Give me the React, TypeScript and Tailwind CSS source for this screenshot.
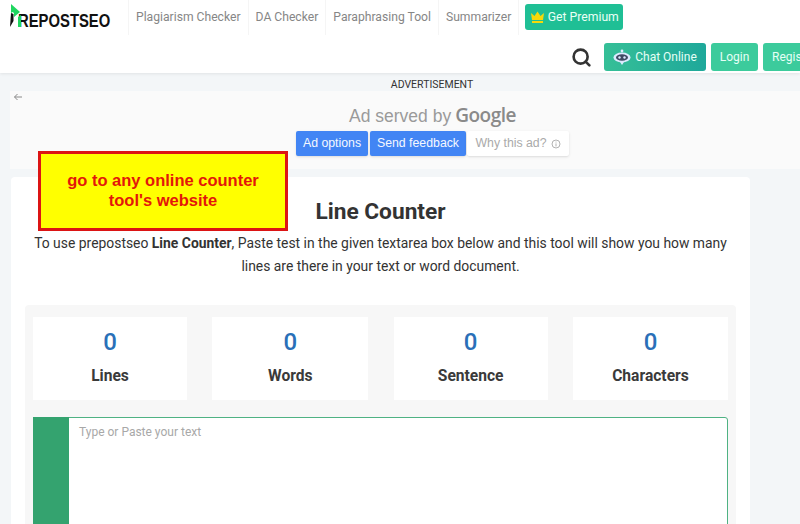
import { Search } from "lucide-react";

const navItems = ["Plagiarism Checker", "DA Checker", "Paraphrasing Tool", "Summarizer"];
const stats = ["Lines", "Words", "Sentence", "Characters"];

const Logo = () => (
  <div className="flex items-start w-[128px] h-[35px] pl-[10px] pt-[4px]">
    <svg width="11" height="24" viewBox="0 0 11 24" className="relative z-10 shrink-0">
      <path d="M1 0 L10 8 L4 13 L4 9 L2.5 8 L1 9 Z" fill="#1fd65f" />
      <path d="M1 9 L3.5 10 L3.5 17 L0 23 Z" fill="#111" />
      <path d="M8 13 L11 11 L11 23 L8 23 Z" fill="#1fd65f" />
    </svg>
    <span className="mt-[8px] ml-[-3px] font-['Liberation_Sans',sans-serif] font-bold text-[19px] leading-[17px] text-[#111] scale-x-[0.78] origin-left">
      REPOSTSEO
    </span>
  </div>
);

const Header = () => (
  <header className="relative bg-white h-[73px] shrink-0 shadow-[0_1px_3px_rgba(0,0,0,0.08)]">
    <div className="flex h-[35px] items-start">
      <Logo />
      {navItems.map((item) => (
        <a key={item} className="h-[35px] px-[7px] flex items-center border-l border-[#f5f5f5] text-[12.15px] text-[#868686] pb-[1px] whitespace-nowrap">
          {item}
        </a>
      ))}
      <div className="h-[35px] pl-[6px] border-l border-[#f5f5f5]">
        <button className="mt-[4px] h-[26px] w-[98px] flex items-center justify-center gap-[3px] rounded-[3px] bg-[#1fbf95] text-[12.2px] text-[#eafff6] whitespace-nowrap">
          <svg width="15" height="13" viewBox="0 0 15 13">
            <path d="M1 2 L4.5 5 L7.5 0.5 L10.5 5 L14 2 L13 9 L2 9 Z" fill="#f5d90a" />
            <rect x="2" y="10" width="11" height="2" fill="#f5d90a" />
          </svg>
          Get Premium
        </button>
      </div>
    </div>
    <div className="flex items-center h-[28px] mt-[8px] whitespace-nowrap">
      <Search className="ml-[571px] w-[21px] h-[21px] text-[#333] shrink-0" strokeWidth={3} />
      <button className="ml-[12px] h-[28px] w-[102px] shrink-0 flex items-center justify-center gap-[4px] rounded-[3px] bg-gradient-to-r from-[#35bf97] to-[#1ea89a] text-[12px] text-[#e6fff6]">
        <svg width="18" height="17" viewBox="0 0 18 17">
          <circle cx="9" cy="2" r="1.4" fill="#dbeafe" />
          <ellipse cx="9" cy="8.5" rx="8.5" ry="5" fill="#dbeafe" />
          <ellipse cx="9" cy="8.5" rx="6" ry="3.2" fill="#3f4a63" />
          <circle cx="6.5" cy="8.5" r="1.2" fill="#dbeafe" />
          <circle cx="11.5" cy="8.5" r="1.2" fill="#dbeafe" />
          <path d="M7 13 L11 13 L9 16 Z" fill="#dbeafe" />
        </svg>
        Chat Online
      </button>
      <button className="ml-[5px] h-[28px] w-[47px] shrink-0 rounded-[3px] bg-[#3ccb9c] text-[12px] text-[#e6fff6]">Login</button>
      <button className="ml-[5px] h-[28px] w-[70px] shrink-0 rounded-[3px] bg-[#3ccb9c] text-[12px] text-[#e6fff6] text-left pl-[9px]">Register</button>
    </div>
  </header>
);

const AdBlock = () => (
  <section className="shrink-0 h-[104px] pt-[6px]">
    <p className="text-center text-[10.5px] leading-[12px] text-[#333] pl-[64px]">ADVERTISEMENT</p>
    <div className="ml-[10px] h-[78px] bg-[#fafafa] flex flex-col items-center font-['Liberation_Sans',sans-serif]">
      <div className="self-start pl-[3px] pt-[1px] h-[8px] text-[#8a8a8a]">
        <svg width="10" height="10" viewBox="0 0 10 10" fill="none" stroke="currentColor" strokeWidth="1">
          <path d="M9 5 H1.5 M4.5 2 L1.5 5 L4.5 8" />
        </svg>
      </div>
      <div className="flex items-baseline gap-[4px] h-[32px] pt-[4px] ml-[55px] text-[#9a9a9a]">
        <span className="text-[17.5px] leading-[24px]">Ad served by</span>
        <span className="font-['Open_Sans',sans-serif] text-[#8a8a8a] font-semibold text-[19px] leading-[24px] tracking-[-0.5px]">Google</span>
      </div>
      <div className="flex ml-[55px] text-[12.3px]">
        <span className="h-[25px] w-[72px] mr-[2px] flex items-center justify-center rounded-[2px] bg-[#4285f4] text-[#f4f8ff] shadow-sm">Ad options</span>
        <span className="h-[25px] w-[96px] mr-[1px] flex items-center justify-center rounded-[2px] bg-[#4285f4] text-[#f4f8ff] shadow-sm">Send feedback</span>
        <span className="h-[25px] w-[102px] flex items-center justify-center gap-[4px] rounded-[2px] bg-white text-[#aaaaaa] shadow-sm">
          Why this ad?
          <svg width="10" height="10" viewBox="0 0 10 10" fill="none" stroke="currentColor" strokeWidth="0.9">
            <circle cx="5" cy="5" r="4" />
            <path d="M5 4.4 V7.4 M5 2.6 V3.5" />
          </svg>
        </span>
      </div>
    </div>
  </section>
);

export default function App() {
  return (
    <div className="relative w-[800px] h-[524px] overflow-hidden flex flex-col bg-[#f3f6f8] font-['Roboto',sans-serif]">
      <Header />
      <AdBlock />

      <main className="ml-[11px] w-[739px] flex-1 bg-white rounded-t-[4px] pt-[22px] px-[14px]">
        <h1 className="text-center text-[22.7px] leading-[26px] font-bold text-[#333]">Line Counter</h1>
        <p className="mt-[7px] text-center text-[13.9px] leading-[23px] text-[#333]">
          To use prepostseo <b className="font-bold">Line Counter</b>, Paste test in the given textarea box below and this tool will show you how many lines are there in your text or word document.
        </p>

        <div className="mt-[27px] bg-[#f7f7f7] rounded-t-[4px] px-[8px] pt-[12px] h-[300px]">
          <div className="grid grid-cols-[154px_156px_154px_155px] gap-x-[25.33px]">
            {stats.map((label) => (
              <div key={label} className="h-[83px] bg-white flex flex-col items-center pt-[11px]">
                <span className="text-[24px] leading-[28px] font-medium text-[#2a70b8]">0</span>
                <span className="mt-[8px] text-[15.6px] leading-[24px] font-bold text-[#3a3a3a]">{label}</span>
              </div>
            ))}
          </div>
          <div className="mt-[17px] h-[200px] flex bg-white border border-[#4fb283] rounded-t-[3px]">
            <div className="w-[36px] bg-[#34a36f] shrink-0 -ml-px -mt-px" />
            <div className="pl-[10px] pt-[6px] text-[12px] leading-[16px] text-[#a8a8a8]">Type or Paste your text</div>
          </div>
        </div>
      </main>

      {/* callout pasted over the page */}
      <div className="absolute left-[38px] top-[151px] w-[250px] h-[80px] bg-[#ffff00] border-[3px] border-[#dc1414] flex items-center justify-center text-center pb-[3px]">
        <p className="font-['Liberation_Sans',sans-serif] font-bold text-[16.5px] leading-[20px] text-[#e3170a]">
          go to any online counter<br />tool's website
        </p>
      </div>
    </div>
  );
}
